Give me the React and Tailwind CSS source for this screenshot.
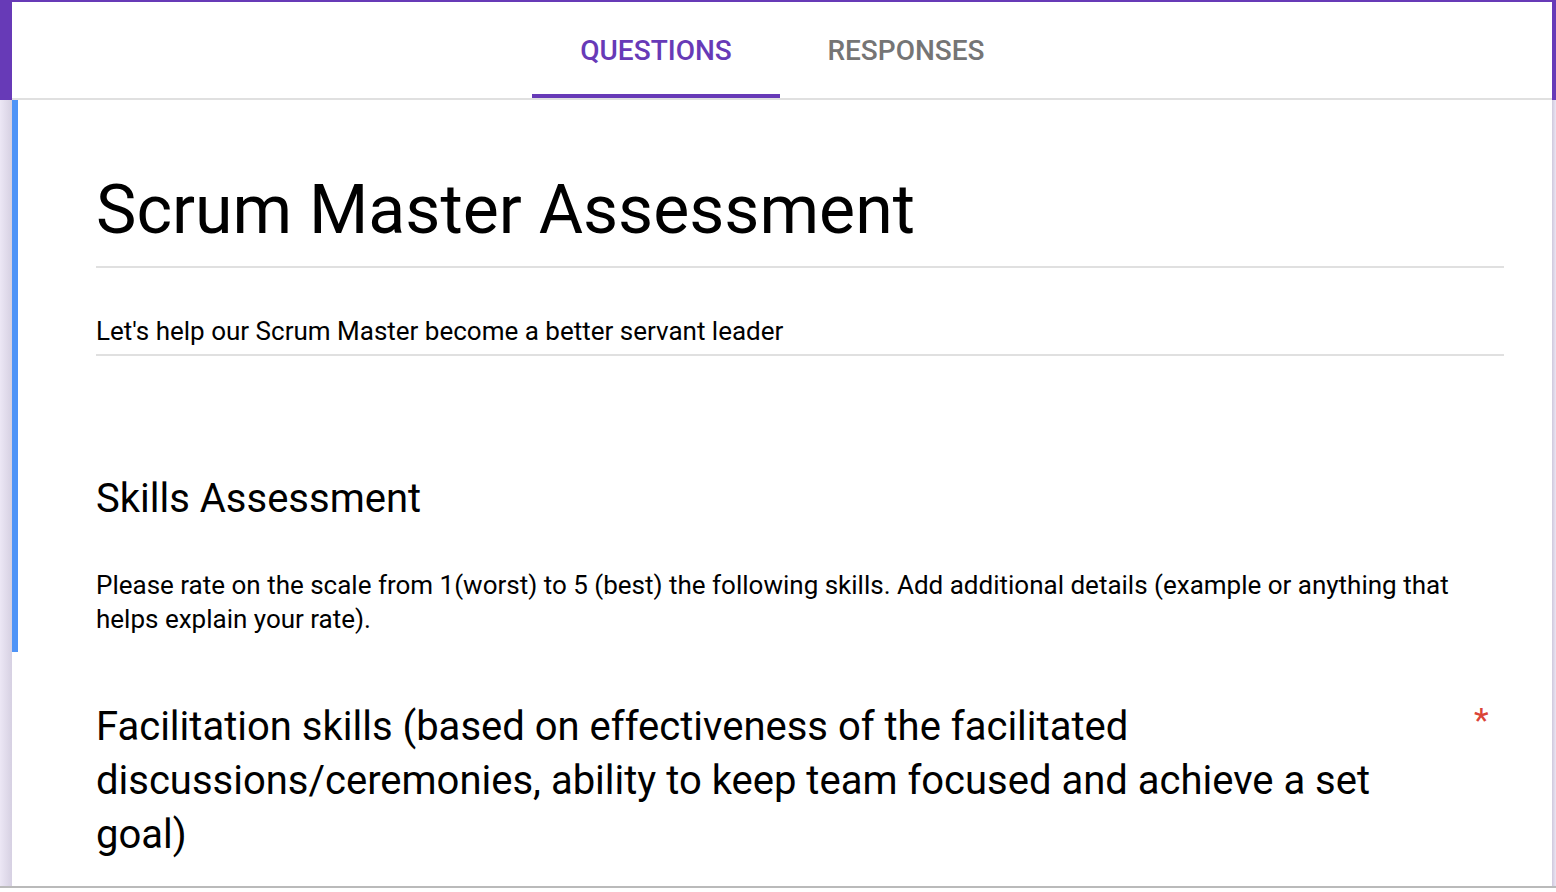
import React, { useState } from "react";

const tabs = ["Questions", "Responses"];

function Tab({ label, active, onClick }) {
  return (
    <button
      type="button"
      onClick={onClick}
      className={`flex h-full w-[248px] items-center justify-center border-b-4 pt-[5px] text-[28px] font-medium uppercase leading-none ${
        active ? "border-[#673ab7] text-[#673ab7]" : "border-transparent text-[#757575]"
      }`}
    >
      {label}
    </button>
  );
}

export default function App() {
  const [tab, setTab] = useState("Questions");

  return (
    <div
      className="flex h-[892px] w-[1556px] flex-col overflow-hidden bg-white text-black"
      style={{ fontFamily: "Roboto, 'Noto Sans', sans-serif" }}
    >
      {/* header with tabs */}
      <div className="flex h-[100px] shrink-0 bg-[#673ab7] pl-[12px] pr-[4px] pt-[2px]">
        <div className="flex flex-1 justify-center gap-[2px] border-b-2 border-[#e0e0e0] bg-white pr-[2px]">
          {tabs.map((t) => (
            <Tab key={t} label={t} active={tab === t} onClick={() => setTab(t)} />
          ))}
        </div>
      </div>

      {/* form body */}
      <div className="flex h-[786px] shrink-0">
        <div className="w-[12px] bg-gradient-to-r from-[#ece7f5] to-[#d6d0e2]" />
        <div className="flex-1 overflow-hidden bg-white">
          <div className="border-l-[6px] border-[#4f94f7] pb-[16px] pl-[78px] pr-[48px] pt-[70px]">
            <div className="border-b-2 border-[#e0e0e0] pb-[16px] text-[68px] leading-[80px]">
              Scrum Master Assessment
            </div>
            <div className="mt-[47px] border-b-2 border-[#e0e0e0] pb-[7px] text-[26px] leading-[32px]">
              Let's help our Scrum Master become a better servant leader
            </div>
            <div className="mt-[119px] text-[40px] leading-[48px]">Skills Assessment</div>
            <p className="mt-[45px] text-[26px] leading-[34px]">
              Please rate on the scale from 1(worst) to 5 (best) the following skills. Add additional
              details (example or anything that helps explain your rate).
            </p>
          </div>

          <div className="mt-[48px] flex pl-[84px] pr-[48px]">
            <div className="flex-1 text-[40px] leading-[54px]">
              Facilitation skills (based on effectiveness of the facilitated discussions/ceremonies,
              ability to keep team focused and achieve a set goal)
            </div>
            <span className="w-[44px] pl-[14px] text-[34px] leading-[40px] text-[#db4437]">*</span>
          </div>
        </div>
        <div className="w-[4px] bg-gradient-to-r from-[#cfc8dc] to-[#ebe6f4]" />
      </div>

      <div className="h-[2px] shrink-0 bg-[#bababa]" />
      <div className="flex-1 bg-white" />
    </div>
  );
}
